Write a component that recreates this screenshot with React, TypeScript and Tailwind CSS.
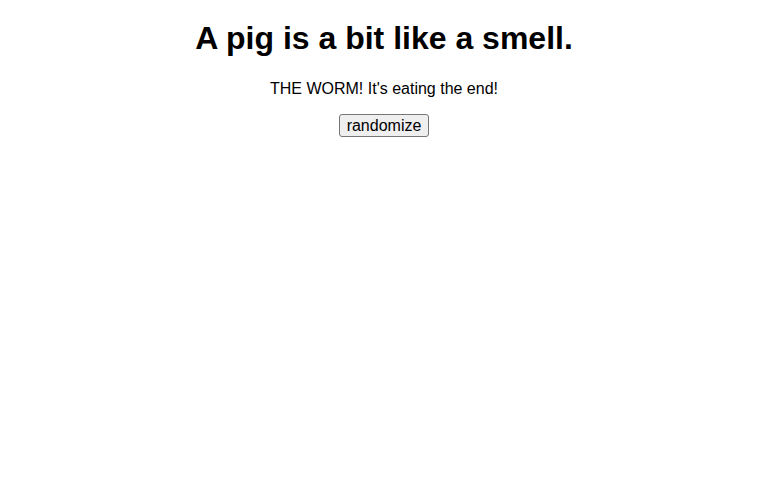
import React, { useState } from "react";

const lines = [
  { title: "A pig is a bit like a smell.", sub: "THE WORM! It's eating the end!" },
];

export default function App() {
  const [i, setI] = useState(0);
  const cur = lines[i % lines.length];

  return (
    <div className="min-h-[480px] bg-white text-center text-black font-['Liberation_Sans',Arial,sans-serif]">
      <h1 className="pt-[20px] text-[32px] leading-[37px] font-bold">{cur.title}</h1>
      <p className="mt-[22px] text-[16px] leading-[19px]">{cur.sub}</p>
      <button
        className="mt-[16px] h-[23px] px-[7px] pt-px text-[16px] leading-[18px] bg-[#efefef] border border-[#767676] rounded-[3px] hover:bg-[#e5e5e5]"
        onClick={() => setI(i + 1)}
      >
        randomize
      </button>
    </div>
  );
}
